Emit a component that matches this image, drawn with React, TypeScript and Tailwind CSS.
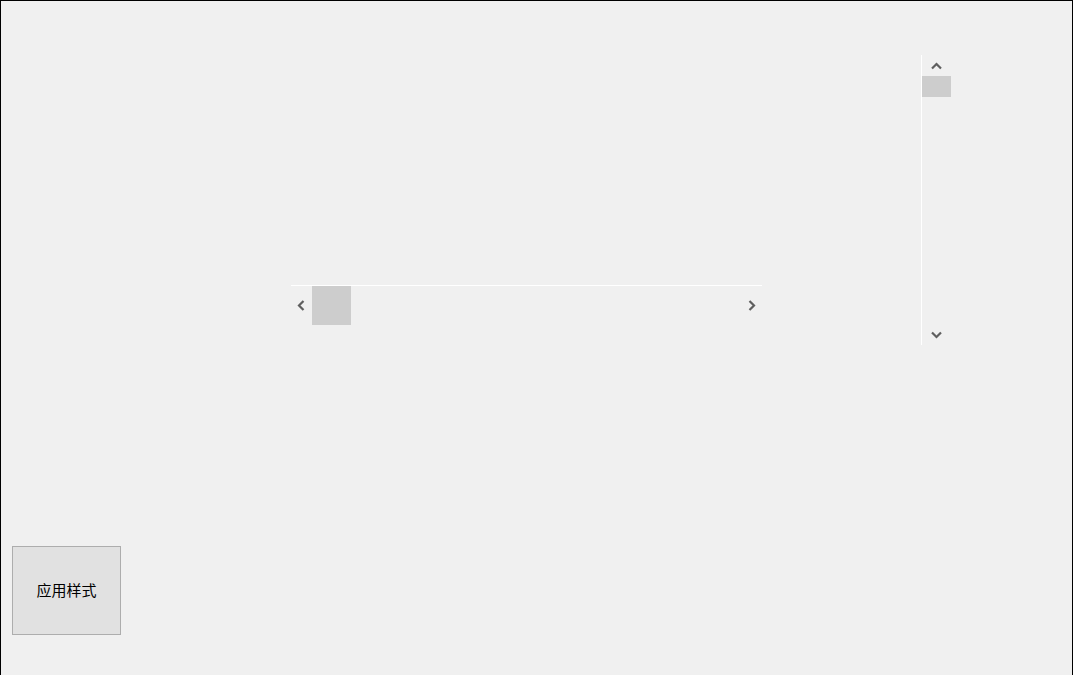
import { ReactNode } from 'react';

function Chevron({ dir }: { dir: 'left' | 'right' | 'up' | 'down' }) {
  const paths: Record<string, string> = {
    left: 'M6.5 1 L2 5.5 L6.5 10',
    right: 'M1.5 1 L6 5.5 L1.5 10',
    up: 'M1 6.5 L5.5 2 L10 6.5',
    down: 'M1 1.5 L5.5 6 L10 1.5',
  };
  const vertical = dir === 'up' || dir === 'down';
  return (
    <svg
      width={vertical ? 11 : 8}
      height={vertical ? 8 : 11}
      viewBox={vertical ? '0 0 11 8' : '0 0 8 11'}
      fill="none"
      stroke="#5f5f5f"
      strokeWidth="2.2"
    >
      <path d={paths[dir]} />
    </svg>
  );
}

function ArrowBox({ children, className }: { children: ReactNode; className: string }) {
  return <div className={`flex items-center justify-center shrink-0 ${className}`}>{children}</div>;
}

function HScrollBar() {
  return (
    <div className="w-[471px] h-[40px] border-t border-white flex shrink-0 mt-[284px] ml-[290px]">
      <ArrowBox className="w-[20px] h-full">
        <Chevron dir="left" />
      </ArrowBox>
      <div className="flex-1 h-full pl-px">
        <div className="w-[39px] h-full bg-[#cdcdcd]" />
      </div>
      <ArrowBox className="w-[21px] h-full">
        <Chevron dir="right" />
      </ArrowBox>
    </div>
  );
}

function VScrollBar() {
  return (
    <div className="w-[30px] h-[290px] border-l border-white flex flex-col shrink-0 mt-[54px] ml-[159px]">
      <ArrowBox className="h-[21px] w-full">
        <Chevron dir="up" />
      </ArrowBox>
      <div className="flex-1 w-full">
        <div className="h-[21px] w-full bg-[#cdcdcd]" />
      </div>
      <ArrowBox className="h-[21px] w-full">
        <Chevron dir="down" />
      </ArrowBox>
    </div>
  );
}

export default function App() {
  return (
    <div
      className="w-[1073px] h-[675px] bg-[#f0f0f0] border-l border-t border-r border-black overflow-hidden flex flex-col"
      style={{ fontFamily: '"Noto Sans CJK SC", "Liberation Sans", sans-serif' }}
    >
      <div className="flex items-start">
        <HScrollBar />
        <VScrollBar />
      </div>
      <button className="mt-[201px] ml-[11px] w-[109px] h-[89px] bg-[#e1e1e1] border border-[#adadad] text-[15px] text-black flex items-center justify-center">
        应用样式
      </button>
    </div>
  );
}
